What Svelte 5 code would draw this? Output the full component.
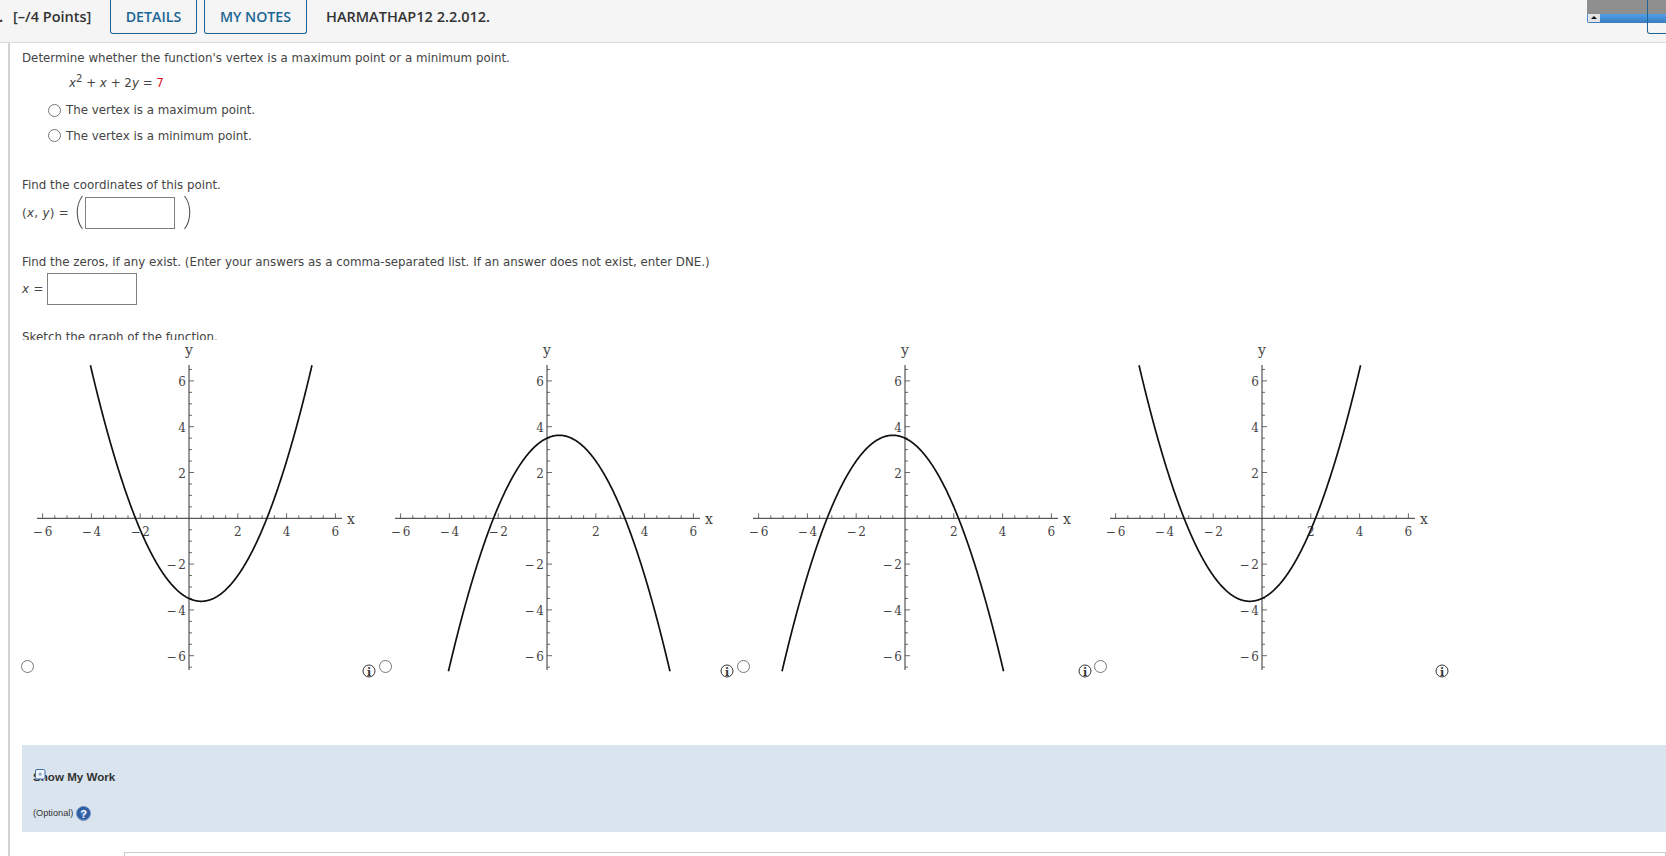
<script lang="ts">
  const xUnit = 24.4;
  const yUnit = 22.9;
  const axisX = 155;
  const axisY = 178.3;
  const yMax = 6.75;

  const xLabels = [-6, -4, -2, 2, 4, 6];
  const yLabels = [6, 4, 2, -2, -4, -6];
  const xTicks = Array.from({ length: 25 }, (_, i) => -6 + i / 2);
  const yTicks = Array.from({ length: 27 }, (_, i) => -6.5 + i / 2);

  const graphs = [
    { sign: 1, b: -1 },
    { sign: -1, b: -1 },
    { sign: -1, b: 1 },
    { sign: 1, b: 1 }
  ];

  function curve(sign: number, b: number) {
    const pts: string[] = [];
    for (let x = -6.2; x <= 6.2; x += 0.02) {
      const y = (sign * (x * x + b * x - 7)) / 2;
      if (Math.abs(y) > yMax) continue;
      pts.push(`${(axisX + x * xUnit).toFixed(2)},${(axisY - y * yUnit).toFixed(2)}`);
    }
    return pts.join(' ');
  }

  const fmt = (n: number) => (n < 0 ? `− ${-n}` : `${n}`);
</script>

<div class="page">
  <header class="top">
    <span class="dot">.</span>
    <span class="points">[–/4 Points]</span>
    <button class="tab details">DETAILS</button>
    <button class="tab notes">MY NOTES</button>
    <span class="code">HARMATHAP12 2.2.012.</span>
  </header>

  <div class="widget">
    <div class="gray"></div>
    <div class="bar"><span class="arrow"></span></div>
    <div class="cut-tab"></div>
  </div>

  <main class="question">
    <p class="line">Determine whether the function's vertex is a maximum point or a minimum point.</p>
    <p class="line equation"><i>x</i><sup>2</sup> + <i>x</i> + 2<i>y</i> = <span class="red">7</span></p>

    <label class="choice first"><input type="radio" name="vertex" /> The vertex is a maximum point.</label>
    <label class="choice"><input type="radio" name="vertex" /> The vertex is a minimum point.</label>

    <p class="line coords-title">Find the coordinates of this point.</p>
    <div class="answer coords">
      <span class="prefix">(<i>x</i>, <i>y</i>) =</span>
      <svg class="paren" width="9" height="35" viewBox="0 0 9 35">
        <path d="M7.5 1 C0.5 10 0.5 25 7.5 34" fill="none" stroke="#555" stroke-width="1.1" />
      </svg>
      <input type="text" />
      <svg class="paren right" width="9" height="35" viewBox="0 0 9 35">
        <path d="M1.5 1 C8.5 10 8.5 25 1.5 34" fill="none" stroke="#555" stroke-width="1.1" />
      </svg>
    </div>

    <p class="line zeros-title">Find the zeros, if any exist. (Enter your answers as a comma-separated list. If an answer does not exist, enter DNE.)</p>
    <div class="answer zeros">
      <span class="prefix"><i>x</i> =</span>
      <input type="text" />
    </div>

    <p class="line sketch">Sketch the graph of the function.</p>

    <div class="graphs">
      {#each graphs as g}
        <div class="cell">
          <input class="pick" type="radio" name="graph" />
          <svg class="plot" width="326" height="336" viewBox="0 0 326 336">
            <line class="axis" x1="3" y1={axisY} x2="308" y2={axisY} />
            <line class="axis" x1={axisX} y1="25" x2={axisX} y2="330" />
            {#each xTicks as t}
              {#if t !== 0}
                <line class="tick" x1={axisX + t * xUnit} x2={axisX + t * xUnit} y1={axisY} y2={axisY - (t % 2 === 0 ? 5 : 3)} />
              {/if}
            {/each}
            {#each yTicks as t}
              {#if t !== 0}
                <line class="tick" x1={axisX} x2={axisX + (t % 2 === 0 ? 5 : 3)} y1={axisY - t * yUnit} y2={axisY - t * yUnit} />
              {/if}
            {/each}
            {#each xLabels as n}
              <text class="num" x={axisX + n * xUnit} y={axisY + 18} text-anchor="middle">{fmt(n)}</text>
            {/each}
            {#each yLabels as n}
              <text class="num" x={axisX - 3} y={axisY - n * yUnit + 5} text-anchor="end">{fmt(n)}</text>
            {/each}
            <text class="name" x={axisX} y="15" text-anchor="middle">y</text>
            <text class="name" x="317" y={axisY + 6} text-anchor="middle">x</text>
            <polyline class="curve" points={curve(g.sign, g.b)} />
          </svg>
          <svg class="info" width="14" height="14" viewBox="0 0 14 14">
            <circle cx="7" cy="7" r="6" fill="#fff" stroke="#333" stroke-width="1" />
            <text x="7" y="11.5" text-anchor="middle">i</text>
          </svg>
        </div>
      {/each}
    </div>

    <section class="work">
      <div class="work-title">
        <svg class="expand" width="11" height="11" viewBox="0 0 11 11">
          <rect x="0.5" y="0.5" width="9.5" height="9.5" rx="1.5" fill="#eef3f9" stroke="#3f6fa8" />
          <circle cx="5.2" cy="5.2" r="1.6" fill="#8fa9cc" />
        </svg>
        Show My Work
      </div>
      <div class="optional">
        (Optional)
        <svg width="15" height="15" viewBox="0 0 15 15">
          <defs>
            <radialGradient id="help" cx="50%" cy="45%" r="55%">
              <stop offset="0%" stop-color="#4f7fc4" />
              <stop offset="75%" stop-color="#2a5598" />
              <stop offset="100%" stop-color="#6f93cc" />
            </radialGradient>
          </defs>
          <circle cx="7.5" cy="7.5" r="7" fill="url(#help)" stroke="#5f84bf" stroke-width="0.8" />
          <text x="7.5" y="11.5" text-anchor="middle">?</text>
        </svg>
      </div>
    </section>

    <div class="notes-box"></div>
  </main>
</div>

<style>
  :global(body) {
    overflow: hidden;
    background: #fff;
  }

  .page {
    position: relative;
    height: 856px;
    overflow: hidden;
    font-family: "DejaVu Sans", sans-serif;
    font-size: 11.85px;
    color: #444;
  }

  .top {
    display: flex;
    align-items: flex-start;
    height: 42px;
    background: #f5f5f5;
    border-bottom: 1px solid #ddd;
    font-family: "Open Sans", sans-serif;
    font-weight: 600;
    font-size: 14.5px;
    line-height: 34px;
    color: #333;
  }

  .dot {
    width: 13px;
    font-weight: 700;
    margin-left: -1px;
    margin-right: 1px;
  }

  .points {
    width: 97px;
  }

  .tab {
    height: 34px;
    margin: 0 7px 0 0;
    padding: 0;
    box-sizing: border-box;
    background: none;
    border: 1px solid #1b6694;
    border-top: none;
    border-radius: 0 0 3px 3px;
    color: #1b6694;
    font: inherit;
    font-size: 14.2px;
    line-height: 34px;
  }

  .details {
    width: 87px;
  }

  .notes {
    width: 103px;
    margin-right: 19px;
  }

  .widget {
    position: absolute;
    top: 0;
    right: 0;
    width: 79px;
    height: 34px;
  }

  .gray {
    height: 14px;
    background: #8f8f8f;
  }

  .bar {
    height: 9px;
    border-bottom-left-radius: 2px;
    background: linear-gradient(#4f9fec, #3c7cbc);
  }

  .arrow {
    display: block;
    position: relative;
    width: 12px;
    height: 8px;
    margin-left: 1px;
    background: #e4e4e4;
  }

  .arrow::after {
    content: '';
    position: absolute;
    left: 3px;
    top: 2px;
    border: 3px solid transparent;
    border-top: 0;
    border-bottom: 3px solid #111;
  }

  .cut-tab {
    position: absolute;
    left: 60px;
    top: 0;
    width: 30px;
    height: 33px;
    border: 1px solid #1b6694;
    border-top: none;
    border-radius: 0 0 3px 3px;
  }

  .question {
    height: 813px;
    margin-left: 8px;
    padding: 7px 0 0 12px;
    box-sizing: border-box;
    border-left: 2px solid #d2d2d2;
  }

  .line {
    margin: 0;
    line-height: 16px;
    white-space: nowrap;
  }

  .equation {
    margin-top: 9px;
    padding-left: 47px;
  }

  sup {
    font-size: 10px;
    line-height: 0;
  }

  .red {
    color: #e0101e;
  }

  .choice {
    display: flex;
    align-items: center;
    gap: 5px;
    height: 16px;
    margin-top: 9.5px;
    padding-left: 26px;
  }

  .choice.first {
    margin-top: 11px;
  }

  .choice input,
  .pick {
    width: 13px;
    height: 13px;
    margin: 0;
    flex: none;
  }

  .coords-title {
    margin-top: 33.5px;
  }

  .answer {
    display: flex;
    align-items: center;
  }

  .answer input {
    box-sizing: border-box;
    width: 90px;
    height: 32px;
    margin: 0;
    padding: 0;
    border: 1px solid #808080;
    background: #fff;
  }

  .prefix {
    flex: none;
    letter-spacing: 0.3px;
  }

  .coords {
    margin-top: 2px;
  }

  .coords .prefix {
    width: 53px;
  }

  .zeros .prefix {
    width: 25px;
  }

  .paren {
    flex: none;
    margin-right: 1px;
  }

  .paren.right {
    margin: 0 0 0 8px;
  }

  .zeros-title {
    margin-top: 24px;
  }

  .zeros {
    margin-top: 3px;
  }

  .sketch {
    height: 11px;
    margin-top: 24px;
    overflow: hidden;
  }

  .graphs {
    display: flex;
    margin-left: -1px;
  }

  .cell {
    display: flex;
    flex: none;
    align-items: flex-end;
    width: 357.8px;
  }

  .pick {
    margin-bottom: 5px;
  }

  .plot {
    flex: none;
    margin-bottom: 2px;
    margin-right: 2px;
    overflow: visible;
  }

  .axis {
    stroke: #333;
    stroke-width: 1;
  }

  .tick {
    stroke: #444;
    stroke-width: 0.8;
  }

  .curve {
    fill: none;
    stroke: #111;
    stroke-width: 1.7;
  }

  .num {
    font-family: "DejaVu Serif", serif;
    font-size: 12px;
    fill: #444;
    word-spacing: -2px;
  }

  .name {
    font-family: "DejaVu Serif", serif;
    font-size: 14px;
    fill: #444;
  }

  .info {
    flex: none;
  }

  .info text {
    font-family: "DejaVu Serif", serif;
    font-size: 11px;
    font-weight: 700;
    fill: #333;
  }

  .work {
    height: 87px;
    margin-top: 67px;
    padding: 24px 0 0 11px;
    box-sizing: border-box;
    background: #d9e4ee;
    font-family: "Liberation Sans", sans-serif;
    color: #333;
  }

  .work-title {
    position: relative;
    font-weight: 700;
    font-size: 11.6px;
    line-height: 16px;
  }

  .expand {
    position: absolute;
    left: 2px;
    top: 0;
  }

  .optional {
    display: flex;
    align-items: center;
    gap: 3px;
    height: 16px;
    margin-top: 20px;
    font-size: 9.2px;
  }

  .optional text {
    font-family: "Liberation Sans", sans-serif;
    font-size: 11px;
    font-weight: 700;
    fill: #fff;
  }

  .notes-box {
    height: 60px;
    margin: 20px 0 0 102px;
    border: 1px solid #ccc;
  }
</style>
